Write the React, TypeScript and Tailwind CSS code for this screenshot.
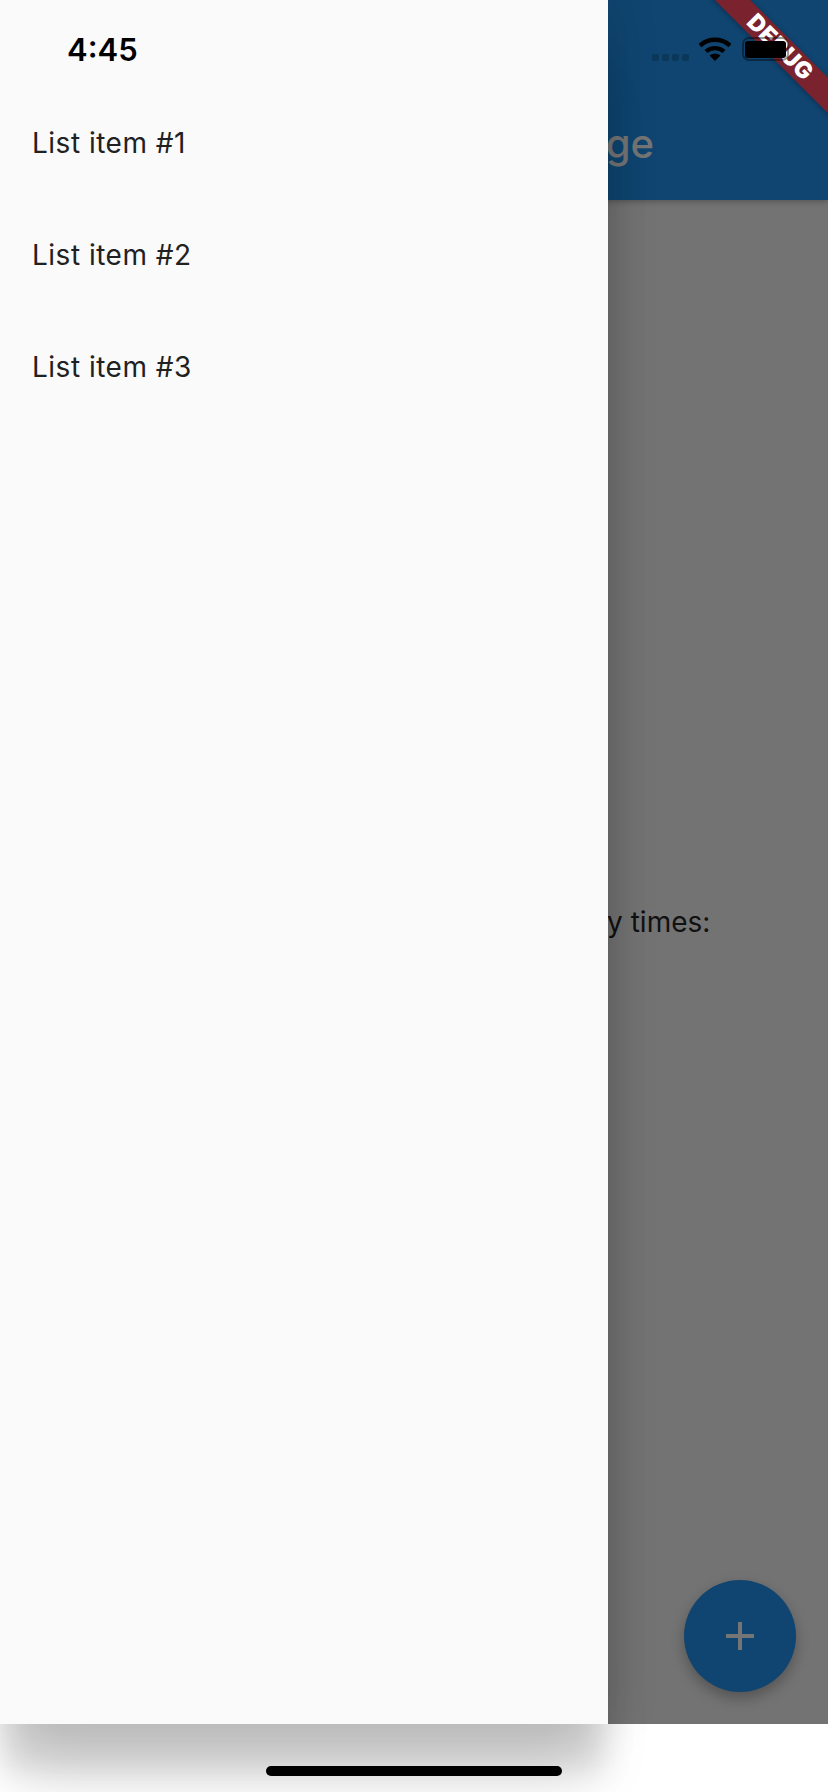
const sans = 'font-["Inter","Liberation_Sans",sans-serif]';

function WifiIcon() {
  return (
    <svg width="32" height="24" viewBox="0 0 32 24" fill="none">
      <path d="M1 8.5C9.5 .8 22.5 .8 31 8.5" stroke="#000" strokeWidth="4.4" strokeLinecap="butt" />
      <path d="M7 14.5C12 10 20 10 25 14.5" stroke="#000" strokeWidth="4.2" strokeLinecap="butt" />
      <path d="M16 24L10.5 18.6C13.6 15.8 18.4 15.8 21.5 18.6Z" fill="#000" />
    </svg>
  );
}

function StatusIcons() {
  return (
    <div className="absolute right-[39px] top-[37px] flex h-[24px] items-end">
      <div className="mr-[10px] flex gap-[3px]">
        <div className="h-[7px] w-[7px] rounded-[2px] bg-[#0b3859]" />
        <div className="h-[7px] w-[7px] rounded-[2px] bg-[#0b3859]" />
        <div className="h-[7px] w-[7px] rounded-[2px] bg-[#0b3859]" />
        <div className="h-[7px] w-[7px] rounded-[2px] bg-[#0b3859]" />
      </div>
      <WifiIcon />
      <div className="ml-[11px] h-[24px] w-[47px] rounded-[7px] border-2 border-black/40 px-[1px] py-[1.5px]">
        <div className="h-full w-full rounded-[3px] bg-black" />
      </div>
    </div>
  );
}

function DebugBanner() {
  return (
    <div className="absolute right-0 top-0 h-[120px] w-[120px] overflow-hidden">
      <div className="absolute left-[-28px] top-[35px] flex h-[25px] w-[200px] rotate-45 items-center justify-center bg-[#7a222e] shadow-[0_1px_5px_rgba(0,0,0,0.3)]">
        <span className="text-[23px] font-black leading-none tracking-[0.5px] text-white">DEBUG</span>
      </div>
    </div>
  );
}

function HomePage() {
  return (
    <div className="flex h-[1724px] flex-col bg-[#737373]">
      <header className="flex h-[200px] items-end bg-[#0f4570] pb-[36px] pl-[32px] shadow-[0_2px_6px_rgba(0,0,0,0.25)]">
        <h1 className="w-[622px] whitespace-nowrap text-right text-[40px] font-medium leading-none text-[#757575]">
          Flutter Demo Home Page
        </h1>
      </header>
      <main className="flex flex-1 flex-col items-center pt-[705px]">
        <p className="whitespace-nowrap text-[28px] leading-[34px] text-[#111111]">
          You have pushed the button this many times:
        </p>
      </main>
      <button className="absolute left-[684px] top-[1580px] flex h-[112px] w-[112px] items-center justify-center rounded-full bg-[#0f4570] shadow-[0_6px_14px_rgba(0,0,0,0.28)]">
        <svg width="28" height="28" viewBox="0 0 28 28">
          <path d="M12 0h4v12h12v4H16v12h-4V16H0v-4h12z" fill="#757575" />
        </svg>
      </button>
    </div>
  );
}

function Drawer() {
  return (
    <aside className="absolute left-0 top-0 flex h-[1724px] w-[608px] flex-col bg-[#fafafa] pt-[115px] shadow-[0_0_50px_rgba(0,0,0,0.14),0_52px_30px_-4px_rgba(0,0,0,0.12),0_75px_60px_-18px_rgba(0,0,0,0.1)]">
      <div className="flex h-[112px] items-start pl-[32px] text-[28px] leading-[56px] tracking-[0.5px] text-[#212121]">List item #1</div>
      <div className="flex h-[112px] items-start pl-[32px] text-[28px] leading-[56px] tracking-[0.5px] text-[#212121]">List item #2</div>
      <div className="flex h-[112px] items-start pl-[32px] text-[28px] leading-[56px] tracking-[0.5px] text-[#212121]">List item #3</div>
    </aside>
  );
}

export default function App() {
  return (
    <div className={`relative h-[1792px] w-[828px] overflow-hidden bg-white ${sans}`}>
      <HomePage />
      <DebugBanner />
      <Drawer />
      <StatusIcons />
      <span className="absolute left-[67px] top-[30px] text-[31px] font-semibold leading-[39px] text-black">4:45</span>
      <div className="absolute bottom-[16px] left-[266px] h-[10px] w-[296px] rounded-full bg-black" />
    </div>
  );
}
